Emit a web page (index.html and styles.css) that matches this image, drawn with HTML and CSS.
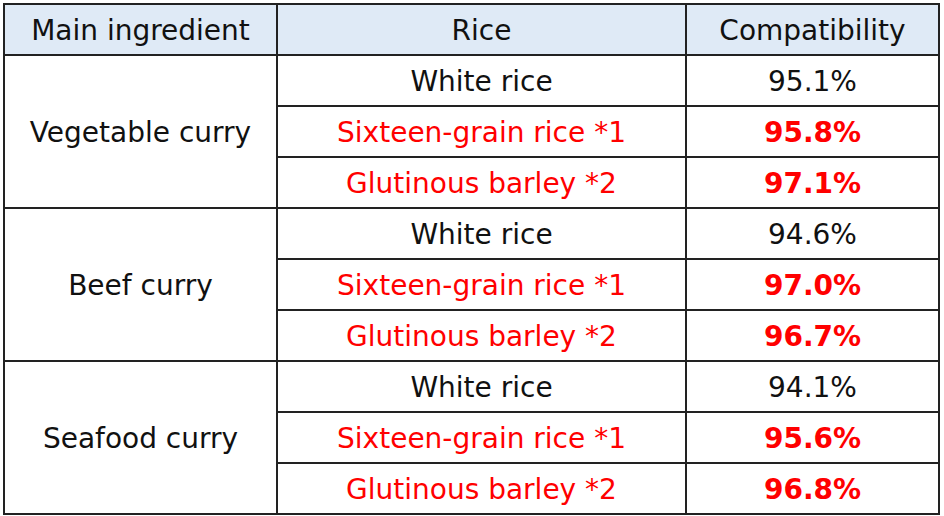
FILE: index.html
```html
<!DOCTYPE html>
<html>
<head>
<meta charset="utf-8">
<link rel="stylesheet" href="styles.css">
</head>
<body>
<table class="tbl">
  <colgroup>
    <col class="c1"><col class="c2"><col class="c3">
  </colgroup>
  <thead>
    <tr><th>Main ingredient</th><th>Rice</th><th>Compatibility</th></tr>
  </thead>
  <tbody>
    <tr><td rowspan="3" class="main">Vegetable curry</td><td>White rice</td><td>95.1%</td></tr>
    <tr class="hl"><td>Sixteen-grain rice *1</td><td class="pct">95.8%</td></tr>
    <tr class="hl"><td>Glutinous barley *2</td><td class="pct">97.1%</td></tr>
    <tr><td rowspan="3" class="main">Beef curry</td><td>White rice</td><td>94.6%</td></tr>
    <tr class="hl"><td>Sixteen-grain rice *1</td><td class="pct">97.0%</td></tr>
    <tr class="hl"><td>Glutinous barley *2</td><td class="pct">96.7%</td></tr>
    <tr><td rowspan="3" class="main">Seafood curry</td><td>White rice</td><td>94.1%</td></tr>
    <tr class="hl"><td>Sixteen-grain rice *1</td><td class="pct">95.6%</td></tr>
    <tr class="hl"><td>Glutinous barley *2</td><td class="pct">96.8%</td></tr>
  </tbody>
</table>
</body>
</html>
```
FILE: styles.css
```css
html, body {
  margin: 0;
  padding: 0;
  background: #ffffff;
}
body {
  padding: 3px 0 0 3px;
  font-family: "DejaVu Sans", Verdana, sans-serif;
}
.tbl {
  border-collapse: collapse;
  width: 935px;
  table-layout: fixed;
  font-size: 28px;
  color: #111111;
}
.c1 { width: 273px; }
.c2 { width: 409px; }
.c3 { width: 253px; }
.tbl th, .tbl td {
  border: 2px solid #222222;
  height: 51px;
  padding: 3px 0 0 0;
  box-sizing: border-box;
  text-align: center;
  vertical-align: middle;
  font-weight: normal;
  line-height: 1;
}
.tbl th {
  background: #dfeaf6;
}
.hl td {
  color: #ff0000;
}
.hl td.pct {
  font-weight: bold;
}
```
